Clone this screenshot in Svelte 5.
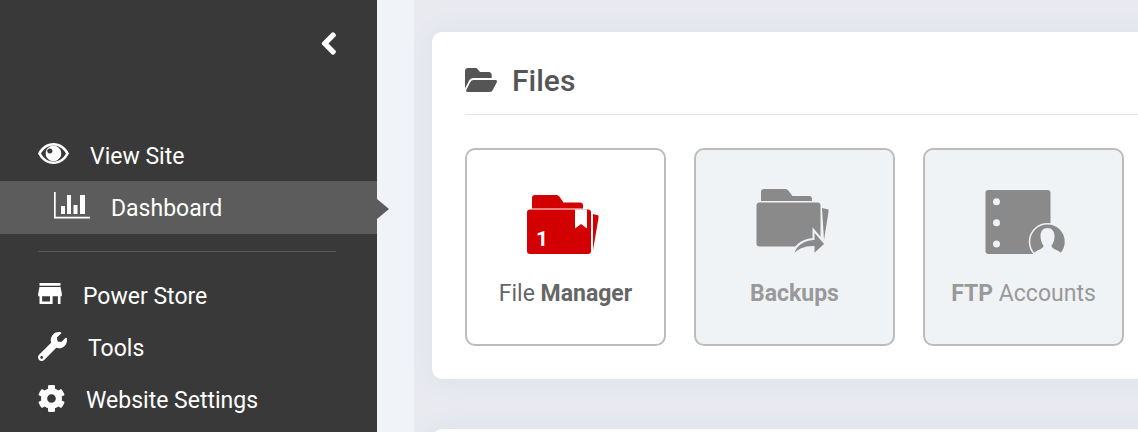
<script>
	// Sidebar rows
	const lowerItems = [
		{ label: 'Power Store', icon: 'store' },
		{ label: 'Tools', icon: 'wrench' },
		{ label: 'Website Settings', icon: 'cog' }
	];
</script>

{#snippet navIcon(name)}
	{#if name === 'eye'}
		<svg class="ico eye" viewBox="0 0 31 21" fill="currentColor">
			<path fill-rule="evenodd" d="M15.5 0C22 0 27.7 3.8 31 10.5 27.7 17.2 22 21 15.5 21S3.3 17.2 0 10.5C3.3 3.8 9 0 15.5 0zM15.5 2.4C10.4 2.4 5.8 5.400 3 10.500 5.800 15.600 10.400 18.600 15.500 18.600S25.200 15.600 28 10.500C25.200 5.400 20.600 2.400 15.500 2.400z" />
			<path fill-rule="evenodd" d="M15.500 2.600A7.800 7.800 0 1 1 15.400 2.600zM11.800 5.400A2.600 2.600 0 1 0 11.900 5.400z" />
		</svg>
	{:else if name === 'chart'}
		<svg class="ico chart" viewBox="0 0 36 27" fill="currentColor">
			<path d="M0 0h1.700v24.800H36v1.700H0z" />
			<path d="M7 14h4v8H7zM13 3h4v19h-4zM19.500 13h4v9h-4zM26 3h5v19h-5z" />
		</svg>
	{:else if name === 'store'}
		<svg class="ico store" viewBox="3 4 18 16" fill="currentColor">
			<path d="M20 4H4v2h16V4zm1 10v-2l-1-5H4l-1 5v2h1v6h10v-6h4v6h2v-6h1zm-9 4H6v-4h6v4z" />
		</svg>
	{:else if name === 'wrench'}
		<svg class="ico wrench" viewBox="0 0 512 512" fill="currentColor">
			<path d="M507.730 109.100c-2.240-9.030-13.540-12.090-20.120-5.510l-74.360 74.360-67.880-11.310-11.310-67.880 74.360-74.360c6.620-6.620 3.430-17.900-5.660-20.160-47.380-11.740-99.550.91-136.580 37.930-39.640 39.640-50.550 97.100-34.050 147.200L18.740 402.760c-24.990 24.990-24.990 65.510 0 90.500 24.990 24.990 65.510 24.990 90.500 0l213.210-213.210c50.120 16.710 107.470 5.680 147.370-34.220 37.070-37.070 49.700-89.320 37.910-136.730zM64 472c-13.250 0-24-10.750-24-24 0-13.260 10.750-24 24-24s24 10.740 24 24c0 13.250-10.750 24-24 24z" />
		</svg>
	{:else if name === 'cog'}
		<svg class="ico cog" viewBox="18 8 476 496" fill="currentColor">
			<path d="M487.400 315.700l-42.600-24.600c4.300-23.200 4.300-47 0-70.200l42.600-24.600c4.900-2.800 7.100-8.600 5.500-14-11.100-35.600-30-67.800-54.700-94.600-3.800-4.100-10-5.100-14.800-2.300L380.800 110c-17.900-15.400-38.500-27.300-60.800-35.100V25.800c0-5.600-3.900-10.500-9.400-11.700-36.700-8.200-74.300-7.800-109.200 0-5.500 1.200-9.400 6.100-9.400 11.700V75c-22.200 7.900-42.800 19.800-60.800 35.100L88.700 85.500c-4.900-2.800-11-1.900-14.800 2.300-24.700 26.700-43.600 58.900-54.700 94.600-1.700 5.400.6 11.200 5.500 14L67.300 221c-4.300 23.200-4.300 47 0 70.200l-42.600 24.600c-4.900 2.800-7.100 8.600-5.500 14 11.100 35.600 30 67.800 54.700 94.600 3.800 4.100 10 5.100 14.800 2.300l42.600-24.600c17.900 15.400 38.500 27.300 60.800 35.100v49.200c0 5.600 3.900 10.500 9.400 11.700 36.700 8.200 74.300 7.800 109.200 0 5.500-1.200 9.400-6.100 9.400-11.700v-49.200c22.200-7.900 42.800-19.800 60.800-35.100l42.600 24.600c4.900 2.800 11 1.900 14.800-2.300 24.700-26.700 43.600-58.900 54.700-94.600 1.500-5.500-.7-11.300-5.600-14.100zM256 336c-44.100 0-80-35.900-80-80s35.900-80 80-80 80 35.900 80 80-35.900 80-80 80z" />
		</svg>
	{/if}
{/snippet}

<div class="page">
	<aside class="sidebar">
		<div class="collapse">
			<svg class="chevron" viewBox="34 38 258 436" fill="currentColor" stroke="currentColor" stroke-width="30" stroke-linejoin="round">
				<path d="M34.520 239.030L228.870 44.690c9.370-9.370 24.570-9.370 33.940 0l22.670 22.670c9.360 9.360 9.370 24.520.04 33.900L131.490 256l154.020 154.750c9.340 9.380 9.320 24.540-.04 33.900l-22.670 22.670c-9.370 9.370-24.570 9.370-33.940 0L34.520 272.970c-9.370-9.370-9.370-24.570 0-33.940z" />
			</svg>
		</div>

		<a class="row">{@render navIcon('eye')}<span>View Site</span></a>
		<a class="row active">{@render navIcon('chart')}<span>Dashboard</span></a>
		<hr />
		{#each lowerItems as item}
			<a class="row">{@render navIcon(item.icon)}<span>{item.label}</span></a>
		{/each}
	</aside>

	<div class="gutter"></div>

	<main>
		<section class="card">
			<h2>
				<svg class="folder" viewBox="0 64 576 384" preserveAspectRatio="none" fill="currentColor">
					<path d="M572.694 292.093L500.270 416.248A63.997 63.997 0 0 1 444.989 448H45.025c-18.523 0-30.064-20.093-20.731-36.093l72.424-124.155A64 64 0 0 1 152 256h399.964c18.523 0 30.064 20.093 20.730 36.093zM152 224h328v-48c0-26.510-21.490-48-48-48H272l-64-64H48C21.490 64 0 85.490 0 112v278.046l69.077-118.418C86.214 242.250 117.989 224 152 224z" />
				</svg>
				Files
			</h2>

			<div class="tiles">
				<div class="tile">
					<svg class="art" viewBox="0 0 80 70">
						<path fill="#d20000" d="M9 6a3 3 0 0 1 3-3h21c1.500 0 2.500.5 3.300 1.600L40.500 10.500H57a3 3 0 0 1 3 3v3H9z" />
						<path fill="#d20000" d="M70 22l5.500 1.500v2.500L70 58z" />
						<rect fill="#d20000" x="4" y="17.500" width="64" height="44.500" rx="3" />
						<path fill="#fff" d="M52 17.500h12v19l-6-4.500-6 4.500z" />
						<text class="one" x="13" y="54">1</text>
					</svg>
					<p>File <b>Manager</b></p>
				</div>

				<div class="tile off">
					<svg class="art" viewBox="0 7 80 70">
						<path fill="#8a8a8a" d="M9 7a3 3 0 0 1 3-3h21c1.500 0 2.500.5 3.300 1.600L40.500 11H57a3 3 0 0 1 3 3v2H9z" />
						<path fill="#8a8a8a" d="M70 23l6.500 1.500v2.500L72 55z" />
						<rect fill="#8a8a8a" x="4.500" y="17.500" width="64" height="44" rx="3" />
						<path fill="#8a8a8a" stroke="#eff3f6" stroke-width="2" d="M40.500 71c2-10 9-16 21-17V45L73.500 59 61.500 70V62c-9 0-16 3-21 9z" />
					</svg>
					<p><b>Backups</b></p>
				</div>

				<div class="tile off">
					<svg class="art" viewBox="0 7 80 70">
						<rect fill="#8a8a8a" x="4.500" y="5" width="65" height="64" rx="3" />
						<circle fill="#eff3f6" cx="15.500" cy="16.700" r="3.500" />
						<circle fill="#eff3f6" cx="15.500" cy="37.700" r="3.500" />
						<circle fill="#eff3f6" cx="15.500" cy="59" r="3.500" />
						<circle fill="#8a8a8a" stroke="#eff3f6" stroke-width="1.500" cx="66.500" cy="56.700" r="18" />
						<path fill="#eff3f6" d="M66.500 43c4.500 0 7 3.500 7 8 0 3.500-1 7-3 9.500 0 2.500 3 3.500 6 5l4 2.500-6 7H58.500l-6-7 4-2.500c3-1.500 6-2.500 6-5-2-2.500-3-6-3-9.500 0-4.500 2.500-8 7-8z" />
					</svg>
					<p><b>FTP</b> Accounts</p>
				</div>
			</div>
		</section>

		<section class="card next"></section>
	</main>
</div>

<style>
	:global(body) {
		margin: 0;
		font-family: Roboto, "Liberation Sans", sans-serif;
	}

	.page {
		display: flex;
		height: 432px;
		overflow: hidden;
		background: #e8eaf0;
	}

	.sidebar {
		position: relative;
		z-index: 2;
		flex: 0 0 377px;
		background: #393939;
		color: #fff;
	}

	.collapse {
		display: flex;
		justify-content: flex-end;
		height: 129px;
		box-sizing: border-box;
		padding: 33px 41px 0 0;
	}

	.chevron {
		width: 14px;
		height: 21px;
		overflow: visible;
	}

	.row {
		display: flex;
		align-items: center;
		gap: 21px;
		height: 52px;
		padding-left: 38px;
		font-size: 23px;
		line-height: 1;
	}

	.row span {
		position: relative;
		top: 1px;
	}

	.row.active {
		position: relative;
		height: 53px;
		padding-left: 54px;
		background: #5c5c5c;
	}

	.row.active::after {
		content: "";
		position: absolute;
		left: 100%;
		top: 18px;
		border-left: 12px solid #5c5c5c;
		border-top: 10px solid transparent;
		border-bottom: 10px solid transparent;
	}

	hr {
		height: 1px;
		margin: 17px 41px 17px 38px;
		border: 0;
		background: #5a5a5a;
	}

	.ico {
		flex: none;
		position: relative;
	}

	.eye {
		width: 31px;
		height: 21px;
		top: -2px;
	}

	.chart {
		width: 36px;
		height: 27px;
		top: -2px;
	}

	.store {
		width: 24px;
		height: 21px;
		top: -2px;
	}

	.wrench {
		width: 29px;
		height: 29px;
		top: -1px;
	}

	.cog {
		width: 27px;
		height: 27px;
		top: -1px;
	}

	.gutter {
		flex: 0 0 37px;
		background: #f0f3f7;
	}

	main {
		flex: 0 0 auto;
		width: 900px;
		padding: 32px 0 0 18px;
	}

	.card {
		box-sizing: border-box;
		height: 347px;
		padding: 0 33px;
		border-radius: 10px;
		background: #fff;
		box-shadow: 0 0 22px rgba(140, 150, 175, 0.1);
	}

	.next {
		margin-top: 50px;
	}

	h2 {
		display: flex;
		align-items: center;
		gap: 15px;
		height: 83px;
		padding-top: 14px;
		margin: 0 0 33px;
		border-bottom: 1px solid #e4e4e4;
		box-sizing: border-box;
		font-size: 30px;
		font-weight: 500;
		color: #555;
	}

	.folder {
		width: 32px;
		height: 24px;
	}

	.tiles {
		display: flex;
		gap: 28px;
	}

	.tile {
		display: flex;
		flex-direction: column;
		align-items: center;
		box-sizing: border-box;
		width: 201px;
		height: 198px;
		padding-top: 42px;
		border: 2px solid #bcbcbc;
		border-radius: 10px;
		color: #666;
	}

	.off {
		background: #eff3f6;
		color: #999;
	}

	.art {
		width: 80px;
		height: 70px;
		margin-left: -6px;
		overflow: visible;
	}

	.one {
		font-family: Roboto, sans-serif;
		font-weight: 700;
		font-size: 21px;
		fill: #fff;
	}

	p {
		margin: 19px 0 0;
		font-size: 23px;
		line-height: 26px;
	}

	b {
		font-weight: 700;
	}
</style>
